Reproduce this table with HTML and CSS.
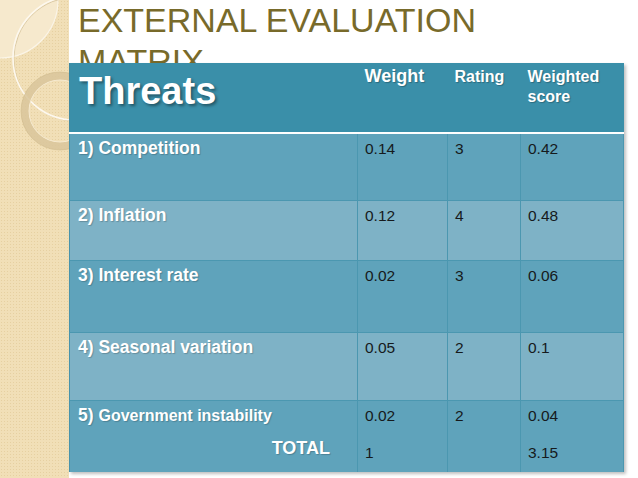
FILE: index.html
```html
<!DOCTYPE html>
<html>
<head>
<meta charset="utf-8">
<link rel="stylesheet" href="styles.css">
</head>
<body>
<div class="slide">
  <aside class="strip">
    <svg class="deco" width="69" height="478" viewBox="0 0 69 478">
      <path d="M0 0 H58 A58 58 0 0 1 0 58 Z" fill="#f6e9cd"/>
      <path d="M58 0 A58 58 0 0 1 0 58" fill="none" stroke="#fbf5e8" stroke-width="1.2"/>
      <circle cx="75" cy="58" r="62" fill="none" stroke="#c9b68a" stroke-width="1" opacity="0.6" transform="translate(0.8 1)"/>
      <circle cx="75" cy="58" r="62" fill="none" stroke="#fdf8ee" stroke-width="1.6"/>
      <circle cx="60" cy="111" r="35" fill="none" stroke="#d9c69b" stroke-width="8" opacity="0.85"/>
      <circle cx="60" cy="111" r="31" fill="none" stroke="#f6ead0" stroke-width="1"/>
      <circle cx="60" cy="111" r="39" fill="none" stroke="#cbb687" stroke-width="0.8" opacity="0.6"/>
    </svg>
  </aside>
  <main class="content">
    <header class="title">
      <h1><span class="line1">EXTERNAL EVALUATION</span><br>MATRIX</h1>
    </header>
    <table class="matrix">
      <colgroup>
        <col class="c1"><col class="c2"><col class="c3"><col class="c4">
      </colgroup>
      <thead>
        <tr class="head">
          <th class="threats">Threats</th>
          <th class="h-weight">Weight</th>
          <th class="h-small">Rating</th>
          <th class="h-small">Weighted<br>score</th>
        </tr>
      </thead>
      <tbody>
        <tr class="odd r1">
          <td class="label">1) Competition</td><td>0.14</td><td>3</td><td>0.42</td>
        </tr>
        <tr class="even r2">
          <td class="label">2) Inflation</td><td>0.12</td><td>4</td><td>0.48</td>
        </tr>
        <tr class="odd r3">
          <td class="label">3) Interest rate</td><td>0.02</td><td>3</td><td>0.06</td>
        </tr>
        <tr class="even r4">
          <td class="label">4) Seasonal variation</td><td>0.05</td><td>2</td><td>0.1</td>
        </tr>
        <tr class="odd r5">
          <td class="label"><div>5) <span class="small">Government instability</span></div><div class="total">TOTAL</div></td>
          <td><div>0.02</div><div class="second">1</div></td>
          <td><div>2</div></td>
          <td><div>0.04</div><div class="second">3.15</div></td>
        </tr>
      </tbody>
    </table>
  </main>
</div>
</body>
</html>
```

FILE: styles.css
```css
html, body {
  margin: 0;
  padding: 0;
  background: #ffffff;
}

.slide {
  display: flex;
  width: 638px;
  height: 478px;
  overflow: hidden;
  font-family: "Liberation Sans", Arial, sans-serif;
}

.strip {
  width: 69px;
  flex: 0 0 69px;
  height: 478px;
  background-color: #f1dfb7;
  background-image: radial-gradient(rgba(210, 180, 120, 0.35) 0.6px, transparent 0.9px);
  background-size: 3px 3px;
}

.deco {
  display: block;
}

.content {
  flex: 1;
  padding-right: 15px;
  display: flex;
  flex-direction: column;
}

.title {
  height: 63px;
  flex: 0 0 63px;
  overflow: hidden;
  padding-left: 9px;
}

.title h1 {
  margin: 0;
  font-size: 34px;
  line-height: 41px;
  font-weight: normal;
  color: #786a2a;
  letter-spacing: 0;
}

.line1 {
  -webkit-box-reflect: below -9px linear-gradient(transparent 55%, rgba(255, 255, 255, 0.35));
}

.matrix {
  width: 554px;
  border-collapse: collapse;
  table-layout: fixed;
  box-shadow: 2px 2px 3px rgba(0, 0, 0, 0.25);
  border-left: 1px solid #3f8aa2;
}

.c1 { width: 288px; }
.c2 { width: 90px; }
.c3 { width: 73px; }
.c4 { width: 103px; }

.head {
  height: 70px;
  background: #3a8fa9;
}

.head th {
  vertical-align: top;
  text-align: left;
  color: #ffffff;
  font-weight: bold;
  padding: 4px 7px 0;
  border-bottom: 2px solid #ffffff;
  text-shadow: 1px 1px 1px rgba(0, 0, 0, 0.25);
  line-height: 20px;
}

.head th.threats {
  font-size: 38px;
  line-height: 42px;
  padding: 7px 8px 0 9px;
  text-shadow: 2px 2px 3px rgba(0, 0, 0, 0.4);
}

.head th.h-weight {
  font-size: 18px;
  line-height: 21px;
  padding-top: 3px;
}

.h-small {
  font-size: 16px;
}

.matrix td {
  vertical-align: top;
  padding: 4px 7px 0;
  font-size: 15.5px;
  line-height: 21px;
  color: #161a1c;
  border: 1px solid #4b97b0;
  border-left-color: #4893ab;
}

.matrix td.label {
  padding-left: 8px;
  font-size: 17.5px;
  font-weight: bold;
  color: #ffffff;
  text-shadow: 1px 1px 1px rgba(0, 0, 0, 0.2);
}

.odd { background: #5fa3bb; }
.even { background: #7eb2c6; }

.r1 { height: 67px; }
.r2 { height: 60px; }
.r3 { height: 72px; }
.r4 { height: 68px; }
.r5 { height: 72px; }

.matrix .r5 td {
  padding-top: 4px;
  border-bottom: none;
}

.small {
  font-size: 16px;
}

.total {
  margin-top: 12px;
  margin-right: 20px;
  text-align: right;
  font-size: 18px;
}

.second {
  margin-top: 16px;
}
```
